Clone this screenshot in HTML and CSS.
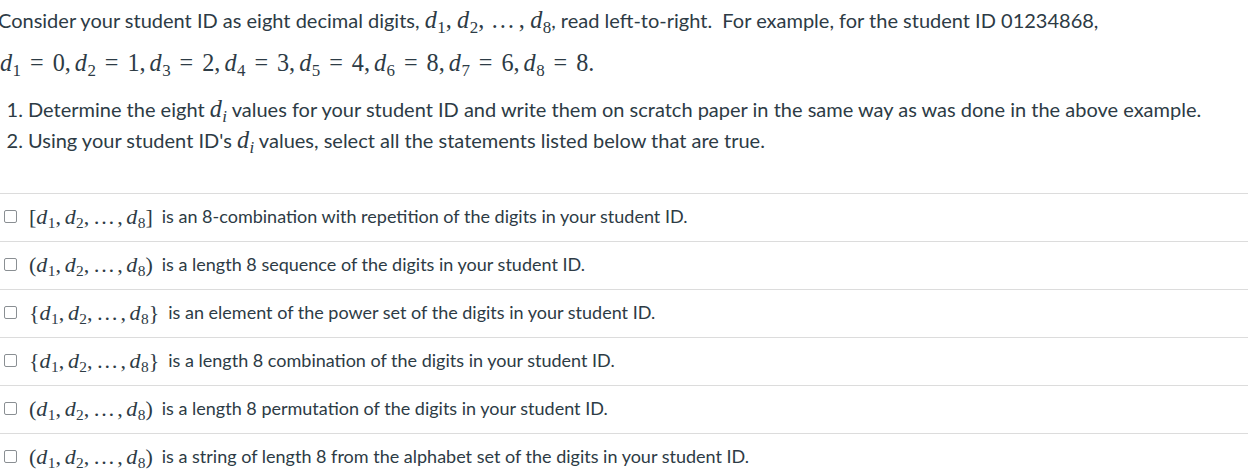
FILE: index.html
```html
<!DOCTYPE html>
<html>
<head>
<meta charset="utf-8">
<link rel="stylesheet" href="styles.css">
</head>
<body>
<div class="question">
  <p class="intro">Consider your student ID as eight decimal digits, <span class="m im"><i>d</i><sub>1</sub><span class="p">,</span><i>d</i><sub>2</sub><span class="p">,</span><span class="dots">…</span><span class="p">,</span><i>d</i><sub>8</sub></span>, read left-to-right.&nbsp; For example, for the student ID 01234868,</p>
  <p class="mathline"><span class="m"><i>d</i><sub>1</sub><span class="rel">=</span>0<span class="p">,</span><i>d</i><sub>2</sub><span class="rel">=</span>1<span class="p">,</span><i>d</i><sub>3</sub><span class="rel">=</span>2<span class="p">,</span><i>d</i><sub>4</sub><span class="rel">=</span>3<span class="p">,</span><i>d</i><sub>5</sub><span class="rel">=</span>4<span class="p">,</span><i>d</i><sub>6</sub><span class="rel">=</span>8<span class="p">,</span><i>d</i><sub>7</sub><span class="rel">=</span>6<span class="p">,</span><i>d</i><sub>8</sub><span class="rel">=</span>8.</span></p>
  <ol class="steps">
    <li>Determine the eight <span class="m"><i>d</i><sub><i>i</i></sub></span> values for your student ID and write them on scratch paper in the same way as was done in the above example.</li>
    <li>Using your student ID's <span class="m"><i>d</i><sub><i>i</i></sub></span> values, select all the statements listed below that are true.</li>
  </ol>
</div>
<div class="answers">
  <div class="row"><span class="box"></span><span class="m am">[<i>d</i><sub>1</sub><span class="p">,</span><i>d</i><sub>2</sub><span class="p">,</span><span class="dots">…</span><span class="p">,</span><i>d</i><sub>8</sub>]</span><span class="txt">is an 8-combination with repetition of the digits in your student ID.</span></div>
  <div class="row"><span class="box"></span><span class="m am">(<i>d</i><sub>1</sub><span class="p">,</span><i>d</i><sub>2</sub><span class="p">,</span><span class="dots">…</span><span class="p">,</span><i>d</i><sub>8</sub>)</span><span class="txt">is a length 8 sequence of the digits in your student ID.</span></div>
  <div class="row"><span class="box"></span><span class="m am">{<i>d</i><sub>1</sub><span class="p">,</span><i>d</i><sub>2</sub><span class="p">,</span><span class="dots">…</span><span class="p">,</span><i>d</i><sub>8</sub>}</span><span class="txt">is an element of the power set of the digits in your student ID.</span></div>
  <div class="row"><span class="box"></span><span class="m am">{<i>d</i><sub>1</sub><span class="p">,</span><i>d</i><sub>2</sub><span class="p">,</span><span class="dots">…</span><span class="p">,</span><i>d</i><sub>8</sub>}</span><span class="txt">is a length 8 combination of the digits in your student ID.</span></div>
  <div class="row"><span class="box"></span><span class="m am">(<i>d</i><sub>1</sub><span class="p">,</span><i>d</i><sub>2</sub><span class="p">,</span><span class="dots">…</span><span class="p">,</span><i>d</i><sub>8</sub>)</span><span class="txt">is a length 8 permutation of the digits in your student ID.</span></div>
  <div class="row"><span class="box"></span><span class="m am">(<i>d</i><sub>1</sub><span class="p">,</span><i>d</i><sub>2</sub><span class="p">,</span><span class="dots">…</span><span class="p">,</span><i>d</i><sub>8</sub>)</span><span class="txt">is a string of length 8 from the alphabet set of the digits in your student ID.</span></div>
</div>
</body>
</html>
```
FILE: styles.css
```css
html, body {
  margin: 0;
  padding: 0;
  background: #ffffff;
}
body {
  font-family: Lato, "Liberation Sans", sans-serif;
  color: #2d3b45;
  font-size: 20px;
  line-height: 1.5;
}
.question {
  margin-left: -2px;
}
.intro {
  margin: 5px 0 0 0;
  line-height: 30px;
  white-space: nowrap;
}
.mathline {
  margin: 13px 0 0 2px;
  line-height: 30px;
}
.steps {
  margin: 16px 0 0 0;
  padding-left: 30px;
}
.steps li {
  line-height: 31px;
  white-space: nowrap;
}
.m {
  font-family: "Liberation Serif", "DejaVu Serif", serif;
  font-size: 1.21em;
  white-space: nowrap;
  line-height: 1;
}
.m i {
  font-style: italic;
}
.m sub {
  font-size: 0.7em;
  vertical-align: -0.3em;
  line-height: 0;
  margin-left: 0.03em;
}
.m .p {
  margin-right: 0.1667em;
}
.m .rel {
  margin: 0 0.37em;
}
.m .dots {
  letter-spacing: 0.1em;
}
.im .p {
  margin-right: 0.22em;
}
.im .dots {
  letter-spacing: 0.16em;
  margin-left: 0.05em;
}
.answers {
  margin-top: 37px;
}
.row {
  display: flex;
  align-items: center;
  height: 47px;
  border-top: 1px solid #dcdcdc;
  font-size: 18px;
  padding-bottom: 2px;
  box-sizing: border-box;
  height: 48px;
}
.box {
  width: 11px;
  height: 11px;
  border: 1px solid #8a8f93;
  border-radius: 2px;
  margin-left: 4px;
  margin-right: 12px;
  flex: none;
}
.am {
  font-size: 22px;
  margin-right: 9px;
}
.txt {
  white-space: nowrap;
}
```
